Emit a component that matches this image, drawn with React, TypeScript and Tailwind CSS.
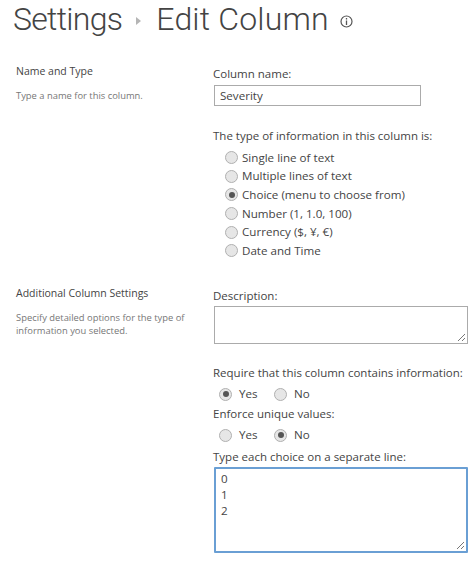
const font = "[font-family:'Open_Sans','Noto_Sans',sans-serif]";

function Radio({ checked }: { checked?: boolean }) {
  return (
    <span className="flex h-[13px] w-[13px] shrink-0 items-center justify-center rounded-full border border-[#b0b0b0] bg-[#e6e6e6]">
      {checked ? <span className="h-[6px] w-[6px] rounded-full bg-[#555]" /> : null}
    </span>
  );
}

function TypeOption({ label, checked }: { label: string; checked?: boolean }) {
  return (
    <div className="flex h-[18.7px] items-center gap-[4px] text-[11.6px] text-[#444]">
      <Radio checked={checked} />
      <span>{label}</span>
    </div>
  );
}

function YesNo({ yes }: { yes: boolean }) {
  return (
    <div className="flex h-[20px] items-center pl-[6px] text-[11.6px] text-[#444]">
      <Radio checked={yes} />
      <span className="ml-[7px] w-[35px]">Yes</span>
      <Radio checked={!yes} />
      <span className="ml-[7px]">No</span>
    </div>
  );
}

function Grip() {
  return (
    <svg className="absolute bottom-[1px] right-[1px]" width="9" height="9" viewBox="0 0 9 9">
      <path d="M1 8 8 1M5 8 8 5" stroke="#777" strokeWidth="1" fill="none" />
    </svg>
  );
}

function SideNote({ title, note }: { title: string; note: string[] }) {
  return (
    <div className="w-[213px] shrink-0 pl-[16px]">
      <div className="text-[10.5px] leading-[14px] text-[#444]">{title}</div>
      <div className="mt-[11px] text-[9.4px] leading-[13px] text-[#777]">
        {note.map((line) => (
          <div key={line}>{line}</div>
        ))}
      </div>
    </div>
  );
}

export default function App() {
  return (
    <div className={`h-[568px] w-[474px] overflow-hidden bg-white ${font}`}>
      <div className="flex h-[64px] items-start pl-[13px] text-[#444]">
        <span className="text-[32px] font-light leading-[38px] tracking-[-0.7px] [font-family:Roboto,sans-serif]">Settings</span>
        <svg className="ml-[14px] mr-[15px] mt-[17px]" width="5" height="8" viewBox="0 0 5 8">
          <path d="M0 0 5 4 0 8Z" fill="#b5b5b5" />
        </svg>
        <span className="text-[32px] font-light leading-[38px] tracking-[0.2px] [font-family:Roboto,sans-serif]">Edit Column</span>
        <svg className="ml-[11px] mt-[15px]" width="13" height="13" viewBox="0 0 13 13">
          <circle cx="6.5" cy="6.5" r="5.5" fill="none" stroke="#555" strokeWidth="1.2" />
          <path d="M6.5 5.5V10M6.5 3V4.4" stroke="#555" strokeWidth="1.3" />
        </svg>
      </div>

      <div className="flex h-[222px]">
        <SideNote title="Name and Type" note={["Type a name for this column."]} />
        <div className="flex-1">
          <div className="text-[11.5px] leading-[20px] text-[#444]">Column name:</div>
          <div className="ml-[1px] mt-px flex h-[21px] w-[207px] items-center border border-[#ababab] pl-[5px] text-[11.6px] text-[#444]">
            Severity
          </div>
          <div className="mt-[20px] text-[11.5px] leading-[20px] text-[#444]">
            The type of information in this column is:
          </div>
          <div className="mt-[2px] pl-[12px]">
            <TypeOption label="Single line of text" />
            <TypeOption label="Multiple lines of text" />
            <TypeOption label="Choice (menu to choose from)" checked />
            <TypeOption label="Number (1, 1.0, 100)" />
            <TypeOption label="Currency ($, ¥, €)" />
            <TypeOption label="Date and Time" />
          </div>
        </div>
      </div>

      <div className="flex">
        <SideNote
          title="Additional Column Settings"
          note={["Specify detailed options for the type of", "information you selected."]}
        />
        <div className="flex-1">
          <div className="text-[11.5px] leading-[20px] text-[#444]">Description:</div>
          <div className="relative ml-[1px] h-[38px] w-[254px] border border-[#ababab]">
            <Grip />
          </div>
          <div className="mt-[19px] whitespace-nowrap text-[11.5px] leading-[20px] text-[#444]">
            Require that this column contains information:
          </div>
          <div className="mt-[1px]">
            <YesNo yes />
          </div>
          <div className="text-[11.5px] leading-[20px] text-[#444]">Enforce unique values:</div>
          <div className="mt-[1px]">
            <YesNo yes={false} />
          </div>
          <div className="pt-[1px] text-[11.5px] leading-[21px] text-[#444]">Type each choice on a separate line:</div>
          <div className="relative ml-[1px] h-[86px] w-[254px] rounded-[1px] border-2 border-[#6a9fd4] pl-[5px] pt-[2px] text-[11.6px] leading-[16px] text-[#444]">
            <div>0</div>
            <div>1</div>
            <div>2</div>
            <Grip />
          </div>
        </div>
      </div>
    </div>
  );
}
